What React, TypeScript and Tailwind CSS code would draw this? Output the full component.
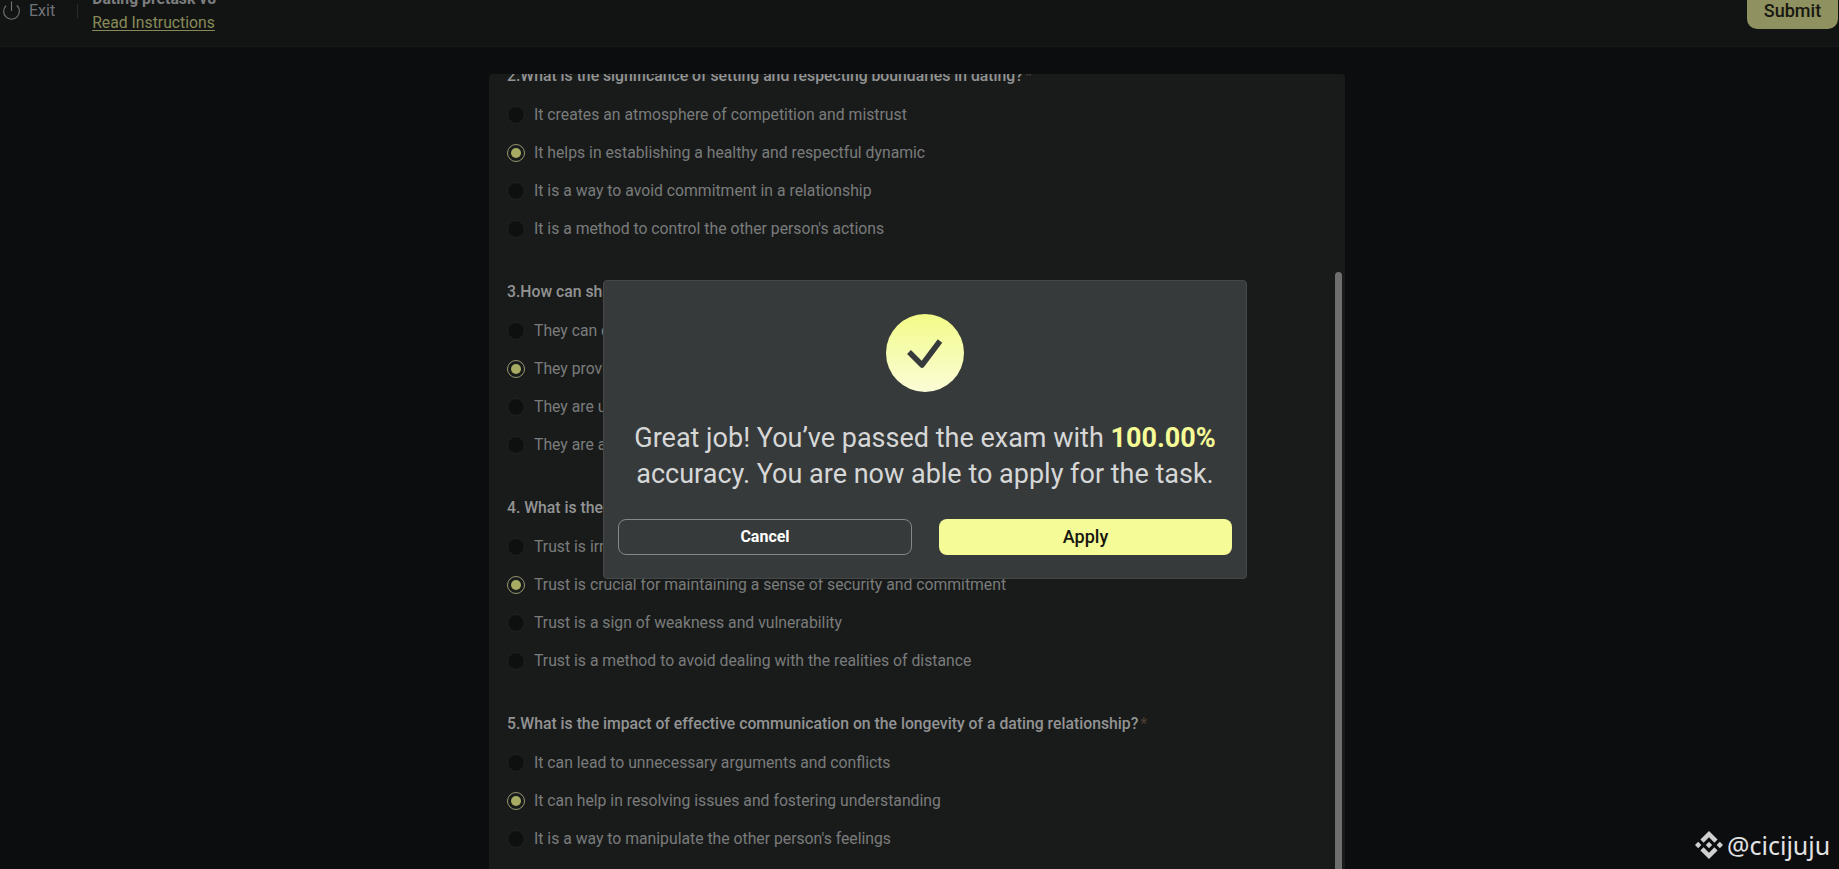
import { Power } from "lucide-react";
import { SiBinance } from "react-icons/si";

const questions = [
  {
    title: "2.What is the significance of setting and respecting boundaries in dating?",
    options: [
      "It creates an atmosphere of competition and mistrust",
      "It helps in establishing a healthy and respectful dynamic",
      "It is a way to avoid commitment in a relationship",
      "It is a method to control the other person's actions",
    ],
  },
  {
    title: "3.How can shared values contribute to a successful dating relationship?",
    options: [
      "They can create unnecessary conflicts between partners",
      "They provide a strong foundation for mutual understanding",
      "They are unimportant in the early stages of dating",
      "They are a way to limit personal growth and freedom",
    ],
  },
  {
    title: "4. What is the role of trust in a long-distance relationship?",
    options: [
      "Trust is irrelevant when partners live far apart",
      "Trust is crucial for maintaining a sense of security and commitment",
      "Trust is a sign of weakness and vulnerability",
      "Trust is a method to avoid dealing with the realities of distance",
    ],
  },
  {
    title: "5.What is the impact of effective communication on the longevity of a dating relationship?",
    options: [
      "It can lead to unnecessary arguments and conflicts",
      "It can help in resolving issues and fostering understanding",
      "It is a way to manipulate the other person's feelings",
    ],
  },
];

function Radio({ selected }: { selected: boolean }) {
  return selected ? (
    <span className="flex h-[18px] w-[18px] shrink-0 items-center justify-center rounded-full border border-[#93956e] bg-[#191b1b]">
      <span className="h-[10px] w-[10px] rounded-full bg-[#a8ab63]" />
    </span>
  ) : (
    <span className="h-[18px] w-[18px] shrink-0 rounded-full border border-[#222222] bg-[#0e1010]" />
  );
}

export default function App() {
  return (
    <div
      className="relative flex h-[869px] w-[1839px] flex-col overflow-hidden bg-[#0b0d0f] text-[15.75px] leading-6"
      style={{ fontFamily: "Roboto, sans-serif" }}
    >
      <header className="flex h-[47px] shrink-0 items-start justify-between overflow-hidden border-b border-[#181a1a] bg-[#121414]">
        <div className="flex items-start">
          <div className="ml-[1px] flex h-[21px] items-center gap-[7px] text-[#6f7277]">
            <Power size={21} strokeWidth={1.3} className="shrink-0" />
            <span className="text-[16px] leading-[16px]">Exit</span>
            <span className="ml-[15px] h-[14px] w-px bg-[#2a2c2c]" />
          </div>
          <div className="-mt-[13px] ml-[14px] flex flex-col">
            <span className="font-bold text-[#7c7d7d]">Dating pretask v8</span>
            <span className="text-[#878a58] underline underline-offset-2">Read Instructions</span>
          </div>
        </div>
        <button className="-mt-[10px] mr-[1px] flex h-[39px] w-[91px] items-center justify-center rounded-b-[10px] rounded-t-none bg-[#8f9160] pt-[2px] text-[18px] font-medium leading-[20px] text-[#17180f]">
          Submit
        </button>
      </header>

      <main className="flex min-h-0 flex-1 justify-center pt-[27px]">
        <section className="ml-[-5px] h-full w-[856px] overflow-hidden rounded-t-[4px] bg-[#191b1b] px-[18px]">
          <div className="-mt-[10px]">
            {questions.map((q) => (
              <div key={q.title} className="mb-8">
                <h2 className="mb-2 h-6 font-medium text-[#929393]">
                  {q.title}
                  <span className="ml-[2px] text-[#4b3b33]">*</span>
                </h2>
                {q.options.map((opt, i) => (
                  <div key={opt} className="flex h-[38px] items-center gap-[9px] text-[#7a7b7b]">
                    <Radio selected={i === 1} />
                    <span>{opt}</span>
                  </div>
                ))}
              </div>
            ))}
          </div>
        </section>
      </main>

      <div className="absolute left-[1335px] top-[272px] h-[620px] w-[7px] rounded-full bg-[#6e6e6e]" />

      <div className="absolute left-[603px] top-[280px] flex h-[299px] w-[644px] flex-col items-center rounded-[4px] border border-[#454848] bg-[#373a3b] px-[14px] pb-[23px] pt-[33px]">
        <div className="flex h-[78px] w-[78px] items-center justify-center rounded-full bg-linear-to-b from-[#f3fb86] to-[#fbfcd6]">
          <svg width="78" height="78" viewBox="0 0 78 78" fill="none">
            <path d="M23 38 L36 51 L54 27" stroke="#373a3b" strokeWidth="5.5" strokeLinejoin="round" />
          </svg>
        </div>
        <p className="mt-[28px] w-[600px] text-center text-[27px] leading-[36px] text-[#d6d7d7]">
          Great job! You’ve passed the exam with <span className="font-bold text-[#f5fb96]">100.00%</span> accuracy. You are now able to apply for the task.
        </p>
        <div className="mt-auto flex w-full justify-between">
          <button className="flex h-[36px] w-[294px] items-center justify-center rounded-[8px] border border-[#85888a] text-[16px] font-bold text-white">
            Cancel
          </button>
          <button className="flex h-[36px] w-[293px] items-center justify-center rounded-[8px] bg-[#f5fb96] text-[18px] font-medium text-[#15160f]">
            Apply
          </button>
        </div>
      </div>

      <div
        className="absolute left-[1695px] top-[831px] flex items-center gap-[4px] text-[25px] leading-[28px] text-[#e2e2e2]"
        style={{ fontFamily: "'Noto Sans', sans-serif" }}
      >
        <SiBinance size={28} className="text-[#d0d0d0]" />
        <span>@cicijuju</span>
      </div>
    </div>
  );
}
